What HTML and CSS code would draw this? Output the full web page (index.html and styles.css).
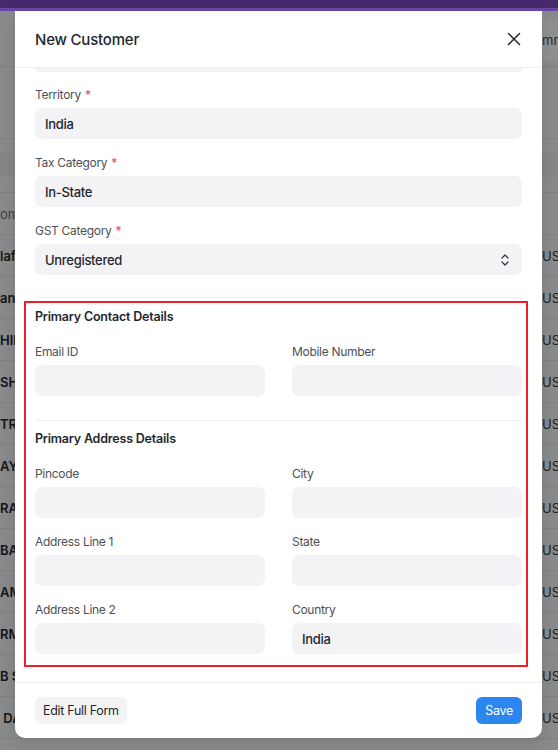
FILE: index.html
```html
<!DOCTYPE html>
<html lang="en">
<head>
    <meta charset="UTF-8">
    <meta name="viewport" content="width=device-width, initial-scale=1.0">
    <title>New Customer</title>
    <link rel="stylesheet" href="styles.css">
</head>
<body>

    <!-- the list page behind the dialog, already dimmed -->
    <div class="desk">
        <div class="topbar"></div>
        <div class="toolbar">
            <div class="toolbar-btn">mm</div>
        </div>
        <div class="filters"></div>
        <div class="list-head"><div class="list-head-bar"></div></div>

        <div class="row"><span class="cell-left muted">om</span><span class="cell-right"></span></div>
        <div class="row"><span class="cell-left">lafe</span><span class="cell-right">USD</span></div>
        <div class="row"><span class="cell-left">an</span><span class="cell-right">USD</span></div>
        <div class="row"><span class="cell-left">HIM</span><span class="cell-right">USD</span></div>
        <div class="row"><span class="cell-left">SHA</span><span class="cell-right">USD</span></div>
        <div class="row"><span class="cell-left">TRA</span><span class="cell-right">USD</span></div>
        <div class="row"><span class="cell-left">AY</span><span class="cell-right">USD</span></div>
        <div class="row"><span class="cell-left">RAJ</span><span class="cell-right">USD</span></div>
        <div class="row"><span class="cell-left">BA</span><span class="cell-right">USD</span></div>
        <div class="row"><span class="cell-left">AM</span><span class="cell-right">USD</span></div>
        <div class="row"><span class="cell-left">RM</span><span class="cell-right">USD</span></div>
        <div class="row"><span class="cell-left">B S</span><span class="cell-right">USD</span></div>
        <div class="row"><span class="cell-left">&nbsp;DA</span><span class="cell-right">USD</span></div>
    </div>

    <div class="modal">
        <div class="modal-header">
            <h4 class="modal-title">New Customer</h4>
            <button class="close-btn" aria-label="Close">
                <svg width="16" height="16" viewBox="0 0 16 16" fill="none" stroke="#1f272e" stroke-width="1.5" stroke-linecap="round">
                    <path d="M2.5 2.5l11 11M13.5 2.5l-11 11"/>
                </svg>
            </button>
        </div>

        <div class="modal-body">
            <div class="control-tail"></div>

            <div class="field">
                <label class="field-label">Territory<span class="reqd">*</span></label>
                <input class="control" type="text" value="India" readonly>
            </div>

            <div class="field">
                <label class="field-label">Tax Category<span class="reqd">*</span></label>
                <input class="control" type="text" value="In-State" readonly>
            </div>

            <div class="field">
                <label class="field-label">GST Category<span class="reqd">*</span></label>
                <div class="control control-select">
                    <span>Unregistered</span>
                    <svg width="8" height="14" viewBox="0 0 8 14" fill="none" stroke="#333c44" stroke-width="1.3" stroke-linecap="round" stroke-linejoin="round">
                        <path d="M1 5l3-3 3 3M1 9l3 3 3-3"/>
                    </svg>
                </div>
            </div>

            <div class="section-break"></div>

            <div class="marked">
                <div class="form-section">
                    <div class="section-head">Primary Contact Details</div>
                    <div class="form-grid">
                        <div class="field">
                            <label class="field-label">Email ID</label>
                            <input class="control" type="text">
                        </div>
                        <div class="field">
                            <label class="field-label">Mobile Number</label>
                            <input class="control" type="text">
                        </div>
                    </div>
                </div>

                <div class="form-section second">
                    <div class="section-head">Primary Address Details</div>
                    <div class="form-grid">
                        <div class="field">
                            <label class="field-label">Pincode</label>
                            <input class="control" type="text">
                        </div>
                        <div class="field">
                            <label class="field-label">City</label>
                            <input class="control" type="text">
                        </div>
                        <div class="field">
                            <label class="field-label">Address Line 1</label>
                            <input class="control" type="text">
                        </div>
                        <div class="field">
                            <label class="field-label">State</label>
                            <input class="control" type="text">
                        </div>
                        <div class="field">
                            <label class="field-label">Address Line 2</label>
                            <input class="control" type="text">
                        </div>
                        <div class="field">
                            <label class="field-label">Country</label>
                            <input class="control" type="text" value="India" readonly>
                        </div>
                    </div>
                </div>
            </div>
        </div>

        <div class="modal-footer">
            <button class="btn btn-default">Edit Full Form</button>
            <button class="btn btn-primary">Save</button>
        </div>
    </div>

</body>
</html>
```

FILE: styles.css
```css
body {
    font-family: 'Inter', 'Noto Sans', sans-serif;
    margin: 0;
    padding: 0;
    background-color: #898a8c;
    color: #1f272e;
    overflow: hidden;
}

/* dimmed page behind the dialog */
.desk {
    width: 558px;
    height: 750px;
}

.topbar {
    height: 8px;
    background-color: #45296c;
    border-bottom: 3px solid #6b45a4;
}

.toolbar {
    height: 56px;
    display: flex;
    justify-content: flex-end;
    align-items: flex-start;
    padding-top: 8px;
    box-sizing: border-box;
    border-bottom: 1px solid #7f8082;
}

.toolbar-btn {
    width: 16px;
    height: 42px;
    line-height: 42px;
    background-color: #8f9092;
    font-size: 13px;
    color: #2a2b2d;
    overflow: hidden;
    white-space: nowrap;
}

.filters {
    height: 71px;
    border-bottom: 1px solid #808183;
}

.list-head {
    height: 54px;
    padding-top: 14px;
    box-sizing: border-box;
    border-bottom: 1px solid #808183;
}

.list-head-bar {
    height: 24px;
    background-color: #858688;
}

.row {
    height: 42px;
    box-sizing: border-box;
    display: flex;
    align-items: center;
    justify-content: space-between;
    border-bottom: 1px solid #818284;
    font-size: 13px;
    font-weight: 600;
    color: #151617;
}

.cell-left {
    width: 15px;
    overflow: hidden;
    white-space: nowrap;
}

.cell-left.muted {
    font-weight: 400;
    color: #3e3f41;
}

.cell-right {
    width: 16px;
    overflow: hidden;
    white-space: nowrap;
    font-weight: 400;
    color: #1e1f20;
}

/* dialog */
.modal {
    position: absolute;
    top: 11px;
    left: 15px;
    width: 527px;
    height: 727px;
    background-color: #fff;
    border-radius: 0 0 10px 10px;
    box-shadow: 0 4px 16px rgba(0, 0, 0, 0.12);
    display: flex;
    flex-direction: column;
    overflow: hidden;
}

.modal-header {
    height: 57px;
    box-sizing: border-box;
    padding: 0 20px;
    display: flex;
    align-items: center;
    justify-content: space-between;
    border-bottom: 1px solid #eeeff1;
}

.modal-title {
    margin: 0;
    font-size: 15px;
    font-weight: 500;
    letter-spacing: -0.2px;
    color: #1f272e;
}

.close-btn {
    background: none;
    border: none;
    padding: 0;
    width: 16px;
    height: 16px;
    cursor: pointer;
    display: flex;
}

.modal-body {
    flex: 1;
    padding: 0 20px;
    overflow: hidden;
}

.control-tail {
    height: 4px;
    background-color: #f3f3f5;
    border-radius: 0 0 8px 8px;
    margin-bottom: 15px;
}

.field {
    margin-bottom: 16px;
}

.field-label {
    display: block;
    font-size: 12px;
    line-height: 16px;
    letter-spacing: -0.3px;
    color: #4c5056;
    margin-bottom: 5px;
}

.reqd {
    color: #e24c4c;
    margin-left: 4px;
}

.control {
    display: block;
    width: 100%;
    height: 31px;
    box-sizing: border-box;
    border: none;
    outline: none;
    border-radius: 7px;
    background-color: #f3f3f5;
    padding: 0 10px;
    font-family: 'Inter', 'Noto Sans', sans-serif;
    font-size: 13px;
    font-weight: 500;
    letter-spacing: -0.3px;
    color: #1f272e;
}

.control-select {
    display: flex;
    align-items: center;
    justify-content: space-between;
    padding-right: 13px;
}

.section-break {
    border-top: 1px solid #f1f1f3;
    margin-top: 22px;
}

/* highlighted block */
.marked {
    margin: 3px -6px 0 -11px;
    padding: 0 4px 0 9px;
    border: 2px solid #ee1f26;
}

.form-section {
    padding: 6px 0 24px;
}

.form-section.second {
    border-top: 1px solid #eeeff1;
    padding: 10px 0 11px;
}

.form-section.second .field:nth-last-child(-n+2) {
    margin-bottom: 0;
}

.form-section:first-child .field {
    margin-bottom: 0;
}

.section-head {
    font-size: 12.5px;
    line-height: 16px;
    font-weight: 600;
    letter-spacing: -0.2px;
    color: #1f272e;
    margin-bottom: 19px;
}

.form-grid {
    display: grid;
    grid-template-columns: 1fr 1fr;
    column-gap: 27px;
}

.modal-footer {
    height: 56px;
    box-sizing: border-box;
    border-top: 1px solid #eeeff1;
    padding: 0 20px;
    display: flex;
    align-items: center;
    justify-content: space-between;
}

.btn {
    height: 27px;
    border: none;
    border-radius: 6px;
    padding: 0 8px;
    font-family: 'Inter', 'Noto Sans', sans-serif;
    font-size: 12.5px;
    letter-spacing: -0.3px;
    cursor: pointer;
}

.btn-default {
    background-color: #f3f3f5;
    color: #1f272e;
}

.btn-primary {
    background-color: #2c86ee;
    color: #fff;
    padding: 0 9px;
}
```
